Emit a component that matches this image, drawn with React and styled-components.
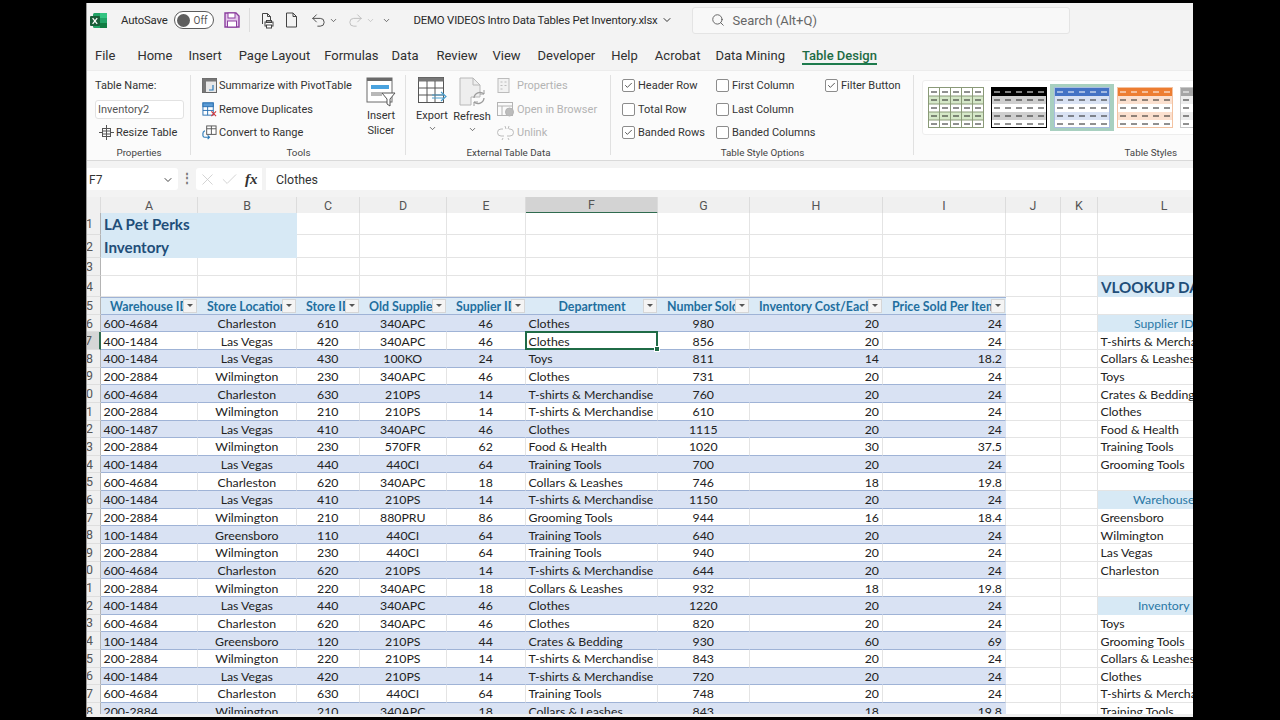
import React from "react";
import styled, { createGlobalStyle } from "styled-components";
import { ChevronDown, Search, Undo2, Redo2, X, Check } from "lucide-react";

const UI_FONT = `Roboto, "Open Sans", "Liberation Sans", sans-serif`;
const CELL_FONT = `Lato, "Open Sans", "Liberation Sans", sans-serif`;
const COLS = "14px 97px 99px 63px 87px 79px 132px 92px 133px 123px 55px 37px 133px";

const Global = createGlobalStyle`
  html, body { margin: 0; padding: 0; background: #000; }
  body { font-family: ${UI_FONT}; overflow: hidden; }
`;

const Stage = styled.div`
  width: 1280px;
  height: 720px;
  padding: 3px 0 3px 86px;
  box-sizing: border-box;
  background: #000;
`;
const Win = styled.div`
  width: 1107px;
  height: 714px;
  background: #f3f3f3;
  border-left: 1px solid #9a9a9a;
  box-sizing: border-box;
  overflow: hidden;
  display: flex;
  flex-direction: column;
`;

/* title bar */
const TitleBar = styled.div`
  height: 36px;
  padding-bottom: 2px;
  box-sizing: border-box;
  flex: none;
  display: flex;
  align-items: center;
  color: #2b2b2b;
  font-size: 11.4px;
  letter-spacing: -0.2px;
`;
const Slot = styled.div`
  margin-left: ${(p) => p.$ml || 0}px;
  display: flex;
  align-items: center;
  flex: none;
  white-space: nowrap;
`;
const Toggle = styled.div`
  width: 36px;
  height: 16px;
  border: 1px solid #5c5c5c;
  border-radius: 9px;
  display: flex;
  align-items: center;
  gap: 4px;
  padding-left: 2px;
  box-sizing: content-box;
  font-size: 10px;
  letter-spacing: 0;
  color: #555;
  background: #fff;
  &::before {
    content: "";
    width: 13px;
    height: 13px;
    border-radius: 50%;
    background: #5f5f5f;
  }
`;
const TitleSep = styled.div`
  width: 1px;
  height: 24px;
  background: #dddddd;
  margin-left: ${(p) => p.$ml}px;
`;
const SearchBox = styled.div`
  width: 378px;
  height: 27px;
  margin-left: 19px;
  background: #f8f8f8;
  border: 1px solid #e4e4e4;
  border-radius: 3px;
  box-sizing: border-box;
  display: flex;
  align-items: center;
  gap: 8px;
  padding-left: 18px;
  color: #666;
  font-size: 13px;
  letter-spacing: 0;
`;

/* tabs */
const TabBar = styled.div`
  height: 31px;
  padding: 2px 0 0 8px;
  box-sizing: border-box;
  flex: none;
  display: flex;
  align-items: center;
  font-size: 13px;
  color: #303030;
`;
const Tab = styled.div`
  position: relative;
  margin-right: ${(p) => p.$gap}px;
  white-space: nowrap;
  font-weight: ${(p) => (p.$active ? 500 : 400)};
  color: ${(p) => (p.$active ? "#1d6b44" : "#303030")};
  &::after {
    content: "";
    display: ${(p) => (p.$active ? "block" : "none")};
    position: absolute;
    left: 0;
    right: 0;
    bottom: -2px;
    height: 2px;
    background: #1d7a4c;
  }
`;

/* ribbon */
const Ribbon = styled.div`
  height: 91px;
  flex: none;
  display: flex;
  background: #fbfbfb;
  border-top: 1px solid #ececec;
  border-bottom: 1px solid #d9d9d9;
  box-sizing: border-box;
  font-size: 11px;
  color: #333;
`;
const Group = styled.div`
  width: ${(p) => p.$w}px;
  flex: none;
  display: flex;
  flex-direction: column;
  box-sizing: border-box;
  position: relative;
  &::after {
    content: "";
    display: ${(p) => (p.$last ? "none" : "block")};
    position: absolute;
    right: 0;
    top: 4px;
    bottom: 5px;
    width: 1px;
    background: #e1e1e1;
  }
`;
const GroupBody = styled.div`
  flex: 1;
  display: flex;
  padding: 3px 0 0 ${(p) => p.$pl || 0}px;
  min-height: 0;
`;
const GroupLabel = styled.div`
  height: 15px;
  flex: none;
  margin-top: ${(p) => (p.$push ? "auto" : 0)};
  text-align: ${(p) => p.$align || "center"};
  padding-right: ${(p) => p.$pr || 0}px;
  font-size: 9.8px;
  color: #444;
  line-height: 15px;
`;
const Stack = styled.div`
  display: flex;
  flex-direction: column;
  width: ${(p) => (p.$w ? `${p.$w}px` : "auto")};
  margin-left: ${(p) => p.$ml || 0}px;
`;
const Line = styled.div`
  height: 23.5px;
  display: flex;
  align-items: center;
  gap: ${(p) => p.$gap ?? 2}px;
  white-space: nowrap;
  color: ${(p) => (p.$off ? "#b4b4b4" : "inherit")};
  svg { flex: none; }
`;
const NameInput = styled.div`
  width: 89px;
  height: 19px;
  background: #fff;
  border: 1px solid #e2e2e2;
  border-radius: 3px;
  box-sizing: border-box;
  line-height: 17px;
  padding-left: 2px;
  color: #555;
`;
const BigBtn = styled.div`
  width: ${(p) => p.$w}px;
  margin-left: ${(p) => p.$ml}px;
  padding-top: 3px;
  display: flex;
  flex-direction: column;
  align-items: center;
  line-height: 15px;
  text-align: center;
  svg { flex: none; }
`;
const BigText = styled.div`
  margin: ${(p) => p.$mt ?? 2}px 0 1px;
`;
const Box = styled.div`
  width: 11px;
  height: 11px;
  flex: none;
  border: 1px solid #8c8c8c;
  border-radius: 2px;
  background: #fff;
  display: flex;
  align-items: center;
  justify-content: center;
  color: #222;
`;
const Gallery = styled.div`
  margin: 9px 0 0 8px;
  width: 272px;
  height: 55px;
  flex: none;
  background: #fff;
  border-radius: 3px 0 0 3px;
  border: 1px solid #eeeeee;
  box-sizing: border-box;
  display: flex;
  align-items: center;
  gap: 7px;
  padding-left: 5px;
  overflow: hidden;
`;
const Thumb = styled.div`
  flex: none;
  padding: ${(p) => (p.$sel ? "3px 4px" : "0")};
  margin: ${(p) => (p.$sel ? "0 -4px" : "0")};
  background: ${(p) => (p.$sel ? "#a8d0c0" : "transparent")};
  display: flex;
`;

/* formula bar */
const FormulaBar = styled.div`
  height: 22px;
  margin-top: 7px;
  flex: none;
  display: flex;
  align-items: stretch;
  font-size: 12px;
`;
const NameBox = styled.div`
  width: 91px;
  background: #fff;
  border-radius: 0 3px 3px 0;
  display: flex;
  align-items: center;
  justify-content: space-between;
  padding: 1px 4px 0 2px;
  box-sizing: border-box;
  color: #333;
`;
const Dots = styled.div`
  width: 18px;
  text-align: center;
  color: #777;
  font-size: 12px;
  line-height: 20px;
  font-weight: 700;
`;
const FxBox = styled.div`
  width: 66px;
  background: #fff;
  display: flex;
  align-items: center;
  padding-left: 2px;
  gap: 3px;
  box-sizing: border-box;
  border-radius: 3px 0 0 3px;
  color: #c8c8c8;
`;
const Fx = styled.span`
  font-family: "Liberation Serif", serif;
  font-style: italic;
  font-size: 15px;
  color: #333;
  font-weight: 700;
  margin-left: 3px;
`;
const FormulaInput = styled.div`
  flex: 1;
  margin-left: 4px;
  background: #fff;
  padding-left: 10px;
  line-height: 23px;
  font-size: 12.4px;
  color: #333;
`;

/* sheet */
const Sheet = styled.div`
  margin-top: 7px;
  flex: 1;
  min-height: 0;
  overflow: hidden;
  background: #fff;
  font-family: ${CELL_FONT};
  font-size: 12.3px;
  color: #222;
`;
const BottomStrip = styled.div`
  height: 3px;
  flex: none;
  background: #efefef;
`;
const Row = styled.div`
  display: grid;
  grid-template-columns: ${COLS};
  height: ${(p) => p.$h}px;
  width: 1200px;
`;
const ColHead = styled.div`
  background: ${(p) => (p.$sel ? "#d3d3d3" : "#f0f0f0")};
  border-right: 1px solid #dcdcdc;
  border-bottom: ${(p) => (p.$sel ? "2px solid #2f6b4f" : "1px solid #a8a8a8")};
  box-sizing: border-box;
  display: flex;
  align-items: center;
  justify-content: center;
  font-family: ${UI_FONT};
  font-size: 12.4px;
  color: #555;
`;
const RowHead = styled.div`
  background: ${(p) => (p.$sel ? "#d6d6d6" : "#f0f0f0")};
  border-right: ${(p) => (p.$sel ? "2px solid #2f6b4f" : "1px solid #b4b4b4")};
  border-bottom: 1px solid #dedede;
  box-sizing: border-box;
  display: flex;
  align-items: center;
  justify-content: flex-end;
  padding-right: 7px;
  overflow: hidden;
  font-family: ${UI_FONT};
  font-size: 12.4px;
  color: #555;
`;
const Cell = styled.div`
  position: relative;
  z-index: ${(p) => (p.$sel ? 2 : "auto")};
  box-sizing: border-box;
  display: flex;
  align-items: center;
  justify-content: ${(p) => ({ c: "center", r: "flex-end", l: "flex-start" }[p.$al || "l"])};
  padding: 1px 3px 0 2.5px;
  white-space: nowrap;
  overflow: ${(p) => (p.$sel ? "visible" : "hidden")};
  background: ${(p) => (p.$band ? "#d9e2f3" : "#fff")};
  border-right: 1px solid ${(p) => (p.$band ? "#d9e2f3" : "#e4e4e4")};
  border-bottom: 1px solid ${(p) => (p.$table ? "#9fb3d6" : "#e4e4e4")};
`;
const SelFrame = styled.div`
  position: absolute;
  inset: -1px -1px -1px -1px;
  border: 2px solid #1f6b46;
  &::after {
    content: "";
    position: absolute;
    right: -4px;
    bottom: -4px;
    width: 6px;
    height: 6px;
    background: #1f6b46;
    border: 1px solid #fff;
    box-sizing: border-box;
  }
`;
const TitleCell = styled.div`
  grid-column: span 2;
  background: #d7e9f5;
  display: flex;
  align-items: center;
  padding-left: 3px;
  font-size: 15.2px;
  font-weight: 700;
  color: #1f4e79;
`;
const HeadCell = styled.div`
  position: relative;
  background: #dbeaf6;
  border-top: 1px solid #9fb3d6;
  border-bottom: 1px solid #9fb3d6;
  box-sizing: border-box;
  display: flex;
  align-items: center;
  justify-content: center;
  overflow: hidden;
  padding: 1px 15px 0 0;
  color: #1f6f9f;
  font-weight: 700;
  font-size: 12.4px;
  white-space: nowrap;
`;
const HeadText = styled.div`
  flex: 1;
  min-width: 0;
  overflow: hidden;
  padding-left: ${(p) => (p.$center ? 15 : 9)}px;
  text-align: ${(p) => (p.$center ? "center" : "left")};
`;
const Filter = styled.div`
  position: absolute;
  right: 1px;
  top: 1px;
  bottom: 1px;
  width: 14px;
  background: #f4f4f4;
  border: 1px solid #d6d6d6;
  box-sizing: border-box;
  display: flex;
  align-items: center;
  justify-content: center;
  &::after {
    content: "";
    border-left: 3px solid transparent;
    border-right: 3px solid transparent;
    border-top: 3px solid #555;
  }
`;
const LookupTitle = styled(Cell)`
  background: #d7e9f5;
  border: none;
  padding-left: 3px;
  font-size: 15.2px;
  font-weight: 700;
  color: #1f4e79;
`;
const LookupHead = styled(Cell)`
  background: #d7e9f5;
  border-color: #d7e9f5;
  justify-content: center;
  color: #2a78a5;
`;

/* icons */
const ExcelLogo = () => (
  <svg width="17" height="17" viewBox="0 0 17 17">
    <rect x="3" y="1" width="14" height="15" rx="1.5" fill="#21a366" />
    <rect x="10" y="1" width="7" height="5" fill="#33c481" />
    <rect x="10" y="11" width="7" height="5" fill="#107c41" />
    <rect x="0" y="4" width="10" height="10" rx="1" fill="#185c37" />
    <path d="M2.6 6.2 7.2 11.8M7.2 6.2 2.6 11.8" stroke="#fff" strokeWidth="1.3" />
  </svg>
);
const SaveIcon = () => (
  <svg width="16" height="16" viewBox="0 0 16 16">
    <path d="M1 1h11l3 3v11H1z" fill="#e6c8ee" stroke="#8b3f9e" strokeWidth="1.4" />
    <rect x="4" y="1" width="7" height="5" fill="#fff" stroke="#8b3f9e" />
    <rect x="3.5" y="9" width="9" height="6" fill="#fff" stroke="#8b3f9e" />
  </svg>
);
const PrintPage = () => (
  <svg width="15" height="17" viewBox="0 0 15 17" fill="none" stroke="#444">
    <path d="M2.5 12V1.5h5l3 3V8M7.5 1.5v3h3" />
    <rect x="5" y="10" width="8" height="4" fill="#fff" />
    <rect x="6.5" y="8.5" width="5" height="2" />
    <rect x="6.5" y="13" width="5" height="3" fill="#fff" />
  </svg>
);
const PageIcon = () => (
  <svg width="13" height="16" viewBox="0 0 13 16" fill="none" stroke="#444">
    <path d="M1.5 1h6.5l3.5 3.5V15h-10zM8 1v3.5h3.5" />
  </svg>
);
const PivotIcon = () => (
  <svg width="15" height="15" viewBox="0 0 15 15">
    <rect x=".5" y=".5" width="14" height="14" fill="#e8e8e8" stroke="#666" />
    <rect x=".5" y=".5" width="3.5" height="14" fill="#777" />
    <rect x=".5" y=".5" width="14" height="3" fill="#777" />
    <path d="M11 7v5H7" fill="none" stroke="#2a7ab8" strokeWidth="1.2" />
  </svg>
);
const DupIcon = () => (
  <svg width="15" height="15" viewBox="0 0 16 16">
    <rect x="1" y="1" width="11" height="13" fill="#fff" stroke="#2a6fb0" />
    <rect x="1" y="1" width="11" height="4" fill="#5b9bd5" stroke="#2a6fb0" />
    <path d="M1 9h11M6 5v9" stroke="#2a6fb0" />
    <path d="M10 10l5 5M15 10l-5 5" stroke="#d13438" strokeWidth="1.2" />
  </svg>
);
const ConvertIcon = () => (
  <svg width="15" height="15" viewBox="0 0 16 16" fill="none">
    <rect x="5" y="1" width="10" height="9" fill="#fff" stroke="#555" />
    <path d="M5 4h10M10 1v9" stroke="#555" />
    <path d="M1 8v3.5c0 1 1 1.5 2 1.5h5M6 11l2 2-2 2" stroke="#2a7ab8" strokeWidth="1.2" />
    <path d="M1 8l2-2" stroke="#2a7ab8" strokeWidth="1.2" />
  </svg>
);
const ResizeIcon = () => (
  <svg width="15" height="15" viewBox="0 0 15 15" fill="none" stroke="#555">
    <rect x="3.5" y="3.5" width="8" height="8" />
    <path d="M3.5 6h8M3.5 9h8M7.5 3.5v8M7.5 0v3M7.5 12v3M0 7.5h3M12 7.5h3" />
  </svg>
);
const SlicerIcon = () => (
  <svg width="30" height="30" viewBox="0 0 30 30">
    <rect x="1" y="1" width="25" height="24" fill="#fff" stroke="#6a6a6a" />
    <rect x="1" y="1" width="25" height="3" fill="#6a6a6a" />
    <rect x="5" y="8" width="18" height="4" fill="#4aa3df" />
    <rect x="5" y="15" width="11" height="4" fill="#b8b8b8" />
    <path d="M16 16h13l-5 6v7l-3-2v-5z" fill="#fff" stroke="#555" />
  </svg>
);
const ExportIcon = () => (
  <svg width="29" height="27" viewBox="0 0 29 27">
    <rect x=".5" y=".5" width="25" height="25" fill="#fff" stroke="#555" />
    <rect x=".5" y=".5" width="25" height="4" fill="#777" />
    <path d="M.5 11h25M.5 18h25M9 4v21M17 4v21" stroke="#555" />
    <path d="M14 18h13M14 21h13M23 15l5 4.5-5 4.5" fill="none" stroke="#4a9fd0" strokeWidth="1.2" />
  </svg>
);
const RefreshIcon = () => (
  <svg width="27" height="29" viewBox="0 0 27 29" fill="none">
    <path d="M1 1h13l7 7v12H12v8H1z" fill="#eeeeee" stroke="#b8b8b8" />
    <path d="M14 1v7h7" stroke="#b8b8b8" />
    <path d="M15 21a6 6 0 0 1 10-4M25 21a6 6 0 0 1-10 4" stroke="#9c9c9c" strokeWidth="1.3" />
    <path d="M25 13v4h-4M15 29v-4h4" stroke="#9c9c9c" />
  </svg>
);
const PropIcon = () => (
  <svg width="13" height="15" viewBox="0 0 13 15" fill="none" stroke="#bcbcbc">
    <rect x="1" y=".5" width="11" height="14" fill="#f2f2f2" />
    <path d="M3.5 4h2M3.5 7.5h2M3.5 11h2M7.5 4h2M7.5 7.5h2" />
  </svg>
);
const BrowserIcon = () => (
  <svg width="18" height="15" viewBox="0 0 18 15" fill="none" stroke="#b4b4b4">
    <rect x=".5" y=".5" width="15" height="13" />
    <path d="M.5 4h15M5 4v10" />
    <circle cx="12.5" cy="10" r="4" fill="#bcbcbc" />
  </svg>
);
const UnlinkIcon = () => (
  <svg width="18" height="15" viewBox="0 0 18 15" fill="none" stroke="#bcbcbc">
    <path d="M6 4H4a3.5 3.5 0 0 0 0 7h3M10 11h3a3.5 3.5 0 0 0 0-7h-1M8 1l1 3M12 1l-1 3M6 13l-1 2M11 13l1 2" />
  </svg>
);

const GalleryThumb = ({ head, band, grid, line }) => {
  const rows = [0, 1, 2, 3, 4];
  const xs = [3, 14, 25, 36, 47];
  return (
    <svg width="56" height="41" viewBox="0 0 56 41">
      <rect x=".5" y=".5" width="55" height="40" fill="#fff" stroke={line} />
      <rect x="1" y="1" width="54" height="8" fill={head} />
      {[1, 3].map((r) => (
        <rect key={r} x="1" y={1 + r * 8} width="54" height="8" fill={band} />
      ))}
      {grid && [11.5, 22.5, 33.5, 44.5].map((x) => <path key={x} d={`M${x} 1v39`} stroke={line} />)}
      {grid && [9, 17, 25, 33].map((y) => <path key={y} d={`M1 ${y}h54`} stroke={line} />)}
      {rows.map((r) =>
        xs.map((x) => (
          <path key={`${r}-${x}`} d={`M${x} ${5 + r * 8}h6`} stroke={r === 0 && head !== "#fff" ? "#fff" : "#222"} />
        ))
      )}
    </svg>
  );
};

const TABS = [
  ["File", 22], ["Home", 16], ["Insert", 17], ["Page Layout", 14], ["Formulas", 13], ["Data", 18],
  ["Review", 15], ["View", 17], ["Developer", 16], ["Help", 17], ["Acrobat", 15], ["Data Mining", 17],
];
const LETTERS = ["A", "B", "C", "D", "E", "F", "G", "H", "I", "J", "K", "L"];
const HEADS = [
  "Warehouse ID", "Store Location", "Store ID", "Old Supplier ID", "Supplier ID", "Department",
  "Number Sold", "Inventory Cost/Each", "Price Sold Per Item",
];
const DATA = [
  ["600-4684", "Charleston", 610, "340APC", 46, "Clothes", 980, 20, 24],
  ["400-1484", "Las Vegas", 420, "340APC", 46, "Clothes", 856, 20, 24],
  ["400-1484", "Las Vegas", 430, "100KO", 24, "Toys", 811, 14, 18.2],
  ["200-2884", "Wilmington", 230, "340APC", 46, "Clothes", 731, 20, 24],
  ["600-4684", "Charleston", 630, "210PS", 14, "T-shirts & Merchandise", 760, 20, 24],
  ["200-2884", "Wilmington", 210, "210PS", 14, "T-shirts & Merchandise", 610, 20, 24],
  ["400-1487", "Las Vegas", 410, "340APC", 46, "Clothes", 1115, 20, 24],
  ["200-2884", "Wilmington", 230, "570FR", 62, "Food & Health", 1020, 30, 37.5],
  ["400-1484", "Las Vegas", 440, "440CI", 64, "Training Tools", 700, 20, 24],
  ["600-4684", "Charleston", 620, "340APC", 18, "Collars & Leashes", 746, 18, 19.8],
  ["400-1484", "Las Vegas", 410, "210PS", 14, "T-shirts & Merchandise", 1150, 20, 24],
  ["200-2884", "Wilmington", 210, "880PRU", 86, "Grooming Tools", 944, 16, 18.4],
  ["100-1484", "Greensboro", 110, "440CI", 64, "Training Tools", 640, 20, 24],
  ["200-2884", "Wilmington", 230, "440CI", 64, "Training Tools", 940, 20, 24],
  ["600-4684", "Charleston", 620, "210PS", 14, "T-shirts & Merchandise", 644, 20, 24],
  ["200-2884", "Wilmington", 220, "340APC", 18, "Collars & Leashes", 932, 18, 19.8],
  ["400-1484", "Las Vegas", 440, "340APC", 46, "Clothes", 1220, 20, 24],
  ["600-4684", "Charleston", 620, "340APC", 46, "Clothes", 820, 20, 24],
  ["100-1484", "Greensboro", 120, "210PS", 44, "Crates & Bedding", 930, 60, 69],
  ["200-2884", "Wilmington", 220, "210PS", 14, "T-shirts & Merchandise", 843, 20, 24],
  ["400-1484", "Las Vegas", 420, "210PS", 14, "T-shirts & Merchandise", 720, 20, 24],
  ["600-4684", "Charleston", 630, "440CI", 64, "Training Tools", 748, 20, 24],
  ["200-2884", "Wilmington", 210, "340APC", 18, "Collars & Leashes", 843, 18, 19.8],
];
const ALIGN = ["l", "c", "c", "c", "c", "l", "c", "r", "r"];
const LOOKUP = {
  6: "Supplier ID", 16: "Warehouse", 22: "Inventory",
};
const LOOKUP_TEXT = {
  7: "T-shirts & Merchandise", 8: "Collars & Leashes", 9: "Toys", 10: "Crates & Bedding", 11: "Clothes",
  12: "Food & Health", 13: "Training Tools", 14: "Grooming Tools", 17: "Greensboro", 18: "Wilmington",
  19: "Las Vegas", 20: "Charleston", 23: "Toys", 24: "Grooming Tools", 25: "Collars & Leashes", 26: "Clothes",
  27: "T-shirts & Merchandise", 28: "Training Tools",
};

const Option = ({ on, children }) => (
  <Line $gap={3}>
    <Box>{on && <Check size={9} strokeWidth={2} />}</Box>
    {children}
  </Line>
);

const BlankCells = ({ from = 0, to = 12 }) =>
  LETTERS.slice(from, to).map((l) => <Cell key={l} />);

const LookupCell = ({ n }) => {
  if (LOOKUP[n]) return <LookupHead>{LOOKUP[n]}</LookupHead>;
  return <Cell>{LOOKUP_TEXT[n] || ""}</Cell>;
};

export default function App() {
  return (
    <Stage>
      <Global />
      <Win>
        <TitleBar>
          <Slot $ml={3}><ExcelLogo /></Slot>
          <Slot $ml={14}>AutoSave</Slot>
          <Slot $ml={6}><Toggle>Off</Toggle></Slot>
          <Slot $ml={10}><SaveIcon /></Slot>
          <TitleSep $ml={9} />
          <Slot $ml={10}><PrintPage /></Slot>
          <Slot $ml={10}><PageIcon /></Slot>
          <Slot $ml={12}><Undo2 size={17} color="#444" strokeWidth={1.3} /></Slot>
          <Slot $ml={2}><ChevronDown size={9} color="#444" /></Slot>
          <Slot $ml={9}><Redo2 size={17} color="#bbb" strokeWidth={1.3} /></Slot>
          <Slot $ml={2}><ChevronDown size={9} color="#bbb" /></Slot>
          <Slot $ml={7}><ChevronDown size={9} color="#444" /></Slot>
          <Slot $ml={23}>DEMO VIDEOS Intro Data Tables Pet Inventory.xlsx</Slot>
          <Slot $ml={3}><ChevronDown size={12} color="#333" /></Slot>
          <SearchBox>
            <Search size={14} color="#555" strokeWidth={1.5} />
            Search (Alt+Q)
          </SearchBox>
        </TitleBar>

        <TabBar>
          {TABS.map(([t, g]) => (
            <Tab key={t} $gap={g}>{t}</Tab>
          ))}
          <Tab $active>Table Design</Tab>
        </TabBar>

        <Ribbon>
          <Group $w={104}>
            <GroupBody $pl={8}>
              <Stack>
                <Line>Table Name:</Line>
                <Line><NameInput>Inventory2</NameInput></Line>
                <Line><Slot $ml={4}><ResizeIcon /></Slot>Resize Table</Line>
              </Stack>
            </GroupBody>
            <GroupLabel>Properties</GroupLabel>
          </Group>

          <Group $w={215}>
            <GroupBody $pl={11}>
              <Stack $w={152}>
                <Line><PivotIcon />Summarize with PivotTable</Line>
                <Line><DupIcon />Remove Duplicates</Line>
                <Line><ConvertIcon />Convert to Range</Line>
              </Stack>
              <BigBtn $w={34} $ml={10}>
                <SlicerIcon />
                <BigText $mt={1}>Insert<br />Slicer</BigText>
              </BigBtn>
            </GroupBody>
            <GroupLabel>Tools</GroupLabel>
          </Group>

          <Group $w={205}>
            <GroupBody $pl={7}>
              <BigBtn $w={38} $ml={0}>
                <ExportIcon />
                <BigText $mt={4}>Export</BigText>
                <ChevronDown size={9} color="#444" />
              </BigBtn>
              <BigBtn $w={38} $ml={2}>
                <RefreshIcon />
                <BigText $mt={3}>Refresh</BigText>
                <ChevronDown size={9} color="#444" />
              </BigBtn>
              <Stack $ml={6}>
                <Line $off $gap={7}><PropIcon />Properties</Line>
                <Line $off $gap={2}><BrowserIcon />Open in Browser</Line>
                <Line $off $gap={2}><UnlinkIcon />Unlink</Line>
              </Stack>
            </GroupBody>
            <GroupLabel>External Table Data</GroupLabel>
          </Group>

          <Group $w={303}>
            <GroupBody $pl={11}>
              <Stack $w={94}>
                <Option on>Header Row</Option>
                <Option>Total Row</Option>
                <Option on>Banded Rows</Option>
              </Stack>
              <Stack $w={109}>
                <Option>First Column</Option>
                <Option>Last Column</Option>
                <Option>Banded Columns</Option>
              </Stack>
              <Stack>
                <Option on>Filter Button</Option>
              </Stack>
            </GroupBody>
            <GroupLabel>Table Style Options</GroupLabel>
          </Group>

          <Group $w={279} $last>
            <Gallery>
              <Thumb><GalleryThumb head="#fff" band="#d5e8c8" grid line="#8a9a78" /></Thumb>
              <Thumb><GalleryThumb head="#000" band="#cfcfcf" line="#000" /></Thumb>
              <Thumb $sel><GalleryThumb head="#4472c4" band="#d9e2f3" line="#a9bde0" /></Thumb>
              <Thumb><GalleryThumb head="#ed7d31" band="#fbe0cf" line="#f3c3a2" /></Thumb>
              <Thumb><GalleryThumb head="#a5a5a5" band="#ededed" line="#c8c8c8" /></Thumb>
            </Gallery>
            <GroupLabel $align="right" $pr={16} $push>Table Styles</GroupLabel>
          </Group>
        </Ribbon>

        <FormulaBar>
          <NameBox>F7<ChevronDown size={12} color="#444" /></NameBox>
          <Dots>⋮</Dots>
          <FxBox>
            <X size={19} strokeWidth={1} />
            <Check size={19} strokeWidth={1} />
            <Fx>fx</Fx>
          </FxBox>
          <FormulaInput>Clothes</FormulaInput>
        </FormulaBar>

        <Sheet>
          <Row $h={16}>
            <ColHead />
            {LETTERS.map((l) => (
              <ColHead key={l} $sel={l === "F"}>{l}</ColHead>
            ))}
          </Row>
          <Row $h={22}>
            <RowHead>1</RowHead>
            <TitleCell>LA Pet Perks</TitleCell>
            <BlankCells from={2} />
          </Row>
          <Row $h={23}>
            <RowHead>2</RowHead>
            <TitleCell>Inventory</TitleCell>
            <BlankCells from={2} />
          </Row>
          <Row $h={18}>
            <RowHead>3</RowHead>
            <BlankCells />
          </Row>
          <Row $h={21}>
            <RowHead>4</RowHead>
            <BlankCells to={11} />
            <LookupTitle>VLOOKUP DATA</LookupTitle>
          </Row>
          <Row $h={17.7}>
            <RowHead>5</RowHead>
            {HEADS.map((h) => (
              <HeadCell key={h}>
                <HeadText $center={h === "Department"}>{h}</HeadText>
                <Filter />
              </HeadCell>
            ))}
            <BlankCells from={9} />
          </Row>
          {DATA.map((r, i) => {
            const n = i + 6;
            const band = i % 2 === 0;
            return (
              <Row key={n} $h={17.65}>
                <RowHead $sel={n === 7}>{n}</RowHead>
                {r.map((v, c) => {
                  const sel = n === 7 && c === 5;
                  return (
                    <Cell key={c} $al={ALIGN[c]} $band={band} $table $sel={sel}>
                      {v}
                      {sel && <SelFrame />}
                    </Cell>
                  );
                })}
                <Cell />
                <Cell />
                <LookupCell n={n} />
              </Row>
            );
          })}
        </Sheet>
        <BottomStrip />
      </Win>
    </Stage>
  );
}
